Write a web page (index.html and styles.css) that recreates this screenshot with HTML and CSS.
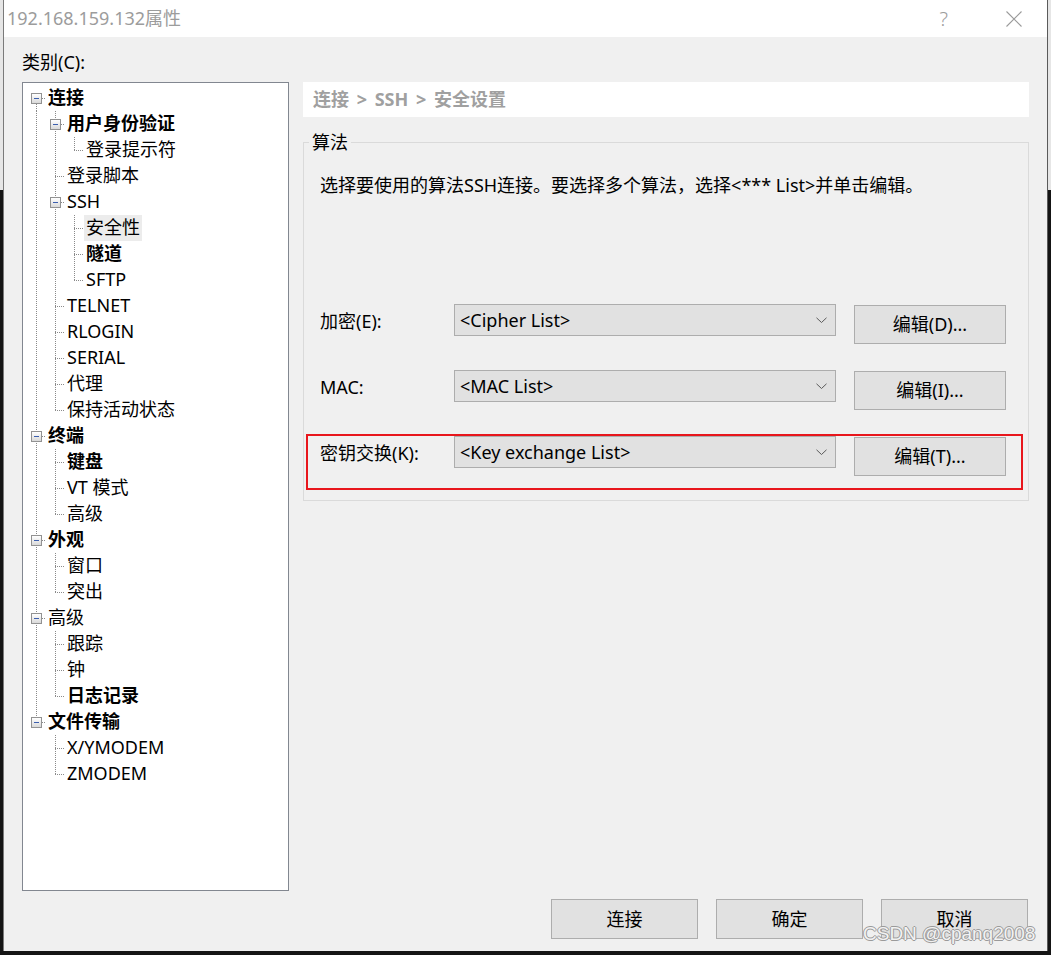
FILE: index.html
```html
<!DOCTYPE html>
<html lang="zh-CN">
<head>
<meta charset="utf-8">
<title>192.168.159.132属性</title>
<link rel="stylesheet" href="styles.css">
</head>
<body>
<div class="window">
  <div class="titlebar">
    <span class="title">192.168.159.132属性</span>
    <span class="help">?</span>
    <svg class="close" width="16" height="16" viewBox="0 0 16 16"><path d="M0.5 0.5 L15.5 15.5 M15.5 0.5 L0.5 15.5" stroke="#9a9a9a" stroke-width="1.1" fill="none"/></svg>
  </div>
  <div class="body">
    <div class="cat-label">类别(C):</div>
    <div class="tree">
      <div class="row"><span class="c f"><span class="exp"></span></span><span class="tx bold">连接</span></div>
      <div class="row"><span class="c p"></span><span class="c t"><span class="exp"></span></span><span class="tx bold">用户身份验证</span></div>
      <div class="row"><span class="c p"></span><span class="c p"></span><span class="c l"></span><span class="tx">登录提示符</span></div>
      <div class="row"><span class="c p"></span><span class="c t"></span><span class="tx">登录脚本</span></div>
      <div class="row"><span class="c p"></span><span class="c t"><span class="exp"></span></span><span class="tx">SSH</span></div>
      <div class="row"><span class="c p"></span><span class="c p"></span><span class="c t"></span><span class="tx sel">安全性</span></div>
      <div class="row"><span class="c p"></span><span class="c p"></span><span class="c t"></span><span class="tx bold">隧道</span></div>
      <div class="row"><span class="c p"></span><span class="c p"></span><span class="c l"></span><span class="tx">SFTP</span></div>
      <div class="row"><span class="c p"></span><span class="c t"></span><span class="tx">TELNET</span></div>
      <div class="row"><span class="c p"></span><span class="c t"></span><span class="tx">RLOGIN</span></div>
      <div class="row"><span class="c p"></span><span class="c t"></span><span class="tx">SERIAL</span></div>
      <div class="row"><span class="c p"></span><span class="c t"></span><span class="tx">代理</span></div>
      <div class="row"><span class="c p"></span><span class="c l"></span><span class="tx">保持活动状态</span></div>
      <div class="row"><span class="c t"><span class="exp"></span></span><span class="tx bold">终端</span></div>
      <div class="row"><span class="c p"></span><span class="c t"></span><span class="tx bold">键盘</span></div>
      <div class="row"><span class="c p"></span><span class="c t"></span><span class="tx">VT 模式</span></div>
      <div class="row"><span class="c p"></span><span class="c l"></span><span class="tx">高级</span></div>
      <div class="row"><span class="c t"><span class="exp"></span></span><span class="tx bold">外观</span></div>
      <div class="row"><span class="c p"></span><span class="c t"></span><span class="tx">窗口</span></div>
      <div class="row"><span class="c p"></span><span class="c l"></span><span class="tx">突出</span></div>
      <div class="row"><span class="c t"><span class="exp"></span></span><span class="tx">高级</span></div>
      <div class="row"><span class="c p"></span><span class="c t"></span><span class="tx">跟踪</span></div>
      <div class="row"><span class="c p"></span><span class="c t"></span><span class="tx">钟</span></div>
      <div class="row"><span class="c p"></span><span class="c l"></span><span class="tx bold">日志记录</span></div>
      <div class="row"><span class="c l"><span class="exp"></span></span><span class="tx bold">文件传输</span></div>
      <div class="row"><span class="c b"></span><span class="c t"></span><span class="tx">X/YMODEM</span></div>
      <div class="row"><span class="c b"></span><span class="c l"></span><span class="tx">ZMODEM</span></div>
    </div>
    <div class="right">
      <div class="crumb">连接 &gt; SSH &gt; 安全设置</div>
      <div class="group">
        <div class="legend">算法</div>
        <div class="desc">选择要使用的算法SSH连接。要选择多个算法，选择&lt;*** List&gt;并单击编辑。</div>
        <div class="rows">
          <div class="lbl">加密(E):</div>
          <div class="combo"><span>&lt;Cipher List&gt;</span><svg width="11" height="7" viewBox="0 0 11 7"><path d="M0.5 0.8 L5.5 5.5 L10.5 0.8" stroke="#5a5a5a" stroke-width="1" fill="none"/></svg></div>
          <div class="btn">编辑(D)...</div>
          <div class="lbl">MAC:</div>
          <div class="combo"><span>&lt;MAC List&gt;</span><svg width="11" height="7" viewBox="0 0 11 7"><path d="M0.5 0.8 L5.5 5.5 L10.5 0.8" stroke="#5a5a5a" stroke-width="1" fill="none"/></svg></div>
          <div class="btn">编辑(I)...</div>
          <div class="lbl">密钥交换(K):</div>
          <div class="combo"><span>&lt;Key exchange List&gt;</span><svg width="11" height="7" viewBox="0 0 11 7"><path d="M0.5 0.8 L5.5 5.5 L10.5 0.8" stroke="#5a5a5a" stroke-width="1" fill="none"/></svg></div>
          <div class="btn">编辑(T)...</div>
        </div>
        <div class="mark"></div>
      </div>
    </div>
    <div class="footer">
      <div class="fbtn">连接</div>
      <div class="fbtn">确定</div>
      <div class="fbtn">取消</div>
    </div>
  </div>
  <div class="watermark">CSDN @cpanq2008</div>
</div>
</body>
</html>
```
FILE: styles.css
```css
html, body {
  margin: 0;
  padding: 0;
}
body {
  width: 1051px;
  height: 955px;
  overflow: hidden;
  background: linear-gradient(to bottom, #e6e6e6 0, #e6e6e6 190px, #151515 190px, #151515 100%);
  font-family: "Noto Sans", "Noto Sans CJK SC", sans-serif;
  font-size: 18px;
  color: #000;
}
.window {
  position: relative;
  margin-left: 3px;
  width: 1045px;
  height: 951px;
  box-sizing: border-box;
  border-left: 1px solid #7a7a7a;
  border-right: 1px solid #5a5a5a;
  background: #f0f0f0;
}
.titlebar {
  height: 37px;
  background: #fff;
  display: flex;
  align-items: center;
  padding-left: 3px;
}
.title {
  color: #9c9c9c;
  font-size: 18px;
  line-height: 37px;
  flex: 1;
}
.help {
  color: #9c9c9c;
  font-size: 20px;
  font-weight: 300;
  line-height: 37px;
  margin-right: 58px;
}
.close {
  margin-right: 25px;
  display: block;
}
.body {
  display: grid;
  grid-template-columns: 267px 1fr;
  column-gap: 14px;
  padding: 12px 18px 0 18px;
}
.cat-label {
  grid-column: 1 / -1;
  height: 26px;
  line-height: 26px;
  margin-bottom: 7px;
}
.tree {
  height: 809px;
  box-sizing: border-box;
  border: 1px solid #828790;
  background: #fff;
  padding: 2px 0 0 4px;
}
.row {
  display: flex;
  height: 26px;
  white-space: nowrap;
}
.c {
  --v: repeating-linear-gradient(to bottom, #8a8a8a 0, #8a8a8a 1px, transparent 1px, transparent 2px);
  --h: repeating-linear-gradient(to right, #8a8a8a 0, #8a8a8a 1px, transparent 1px, transparent 2px);
  flex: none;
  width: 19px;
  height: 26px;
  display: flex;
  align-items: center;
}
.c.p {
  background: var(--v) 9px 0 / 1px 100% no-repeat;
}
.c.t {
  background: var(--h) 9px 13px / 10px 1px no-repeat, var(--v) 9px 0 / 1px 100% no-repeat;
}
.c.l {
  background: var(--h) 9px 13px / 10px 1px no-repeat, var(--v) 9px 0 / 1px 14px no-repeat;
}
.c.f {
  background: var(--h) 9px 13px / 10px 1px no-repeat, var(--v) 9px 13px / 1px 13px no-repeat;
}
.exp {
  width: 11px;
  height: 11px;
  box-sizing: border-box;
  margin-left: 4px;
  border: 1px solid #929292;
  background: linear-gradient(#3c5fae, #3c5fae) center / 5px 1px no-repeat, linear-gradient(#ffffff, #d9d9d9);
}
.tx {
  padding: 0 2px 2px 2px;
  line-height: 24px;
}
.bold {
  font-weight: bold;
}
.sel {
  background: #ececec;
}
.right {
  display: flex;
  flex-direction: column;
}
.crumb {
  height: 35px;
  line-height: 35px;
  background: #fff;
  padding-left: 10px;
  color: #a0a0a0;
  font-weight: bold;
  word-spacing: 3px;
}
.group {
  position: relative;
  margin-top: 25px;
  border: 1px solid #dadada;
  padding: 0 0 24px 16px;
}
.legend {
  width: fit-content;
  margin: -12px 0 0 -11px;
  padding: 0 3px;
  background: #f0f0f0;
  line-height: 22px;
}
.desc {
  margin-top: 19px;
  line-height: 26px;
}
.rows {
  margin-top: 106px;
  display: grid;
  grid-template-columns: 116px 382px 152px;
  column-gap: 18px;
  grid-auto-rows: 40px;
  row-gap: 26px;
}
.lbl {
  margin-top: 1px;
  line-height: 32px;
}
.combo {
  height: 32px;
  box-sizing: border-box;
  border: 1px solid #adadad;
  background: #e1e1e1;
  display: flex;
  align-items: center;
  justify-content: space-between;
  padding: 0 8px 0 5px;
  line-height: 30px;
}
.combo svg {
  display: block;
}
.btn {
  margin-top: 1px;
  height: 39px;
  box-sizing: border-box;
  border: 1px solid #adadad;
  background: #e1e1e1;
  text-align: center;
  line-height: 37px;
}
.mark {
  position: absolute;
  left: 2px;
  top: 291px;
  width: 717px;
  height: 56px;
  box-sizing: border-box;
  border: 2px solid #e8161c;
}
.footer {
  grid-column: 1 / -1;
  margin-top: 8px;
  display: flex;
  justify-content: flex-end;
  gap: 18px;
  padding-right: 1px;
}
.fbtn {
  width: 147px;
  height: 40px;
  box-sizing: border-box;
  border: 1px solid #adadad;
  background: #e1e1e1;
  text-align: center;
  line-height: 38px;
}
.watermark {
  position: absolute;
  left: 859px;
  top: 922px;
  font-family: "Liberation Sans", Arial, sans-serif;
  font-size: 19px;
  line-height: 24px;
  color: #f2f2f2;
  text-shadow: 1px 0 0 #9a9a9a, -1px 0 0 #9a9a9a, 0 1px 0 #9a9a9a, 0 -1px 0 #9a9a9a;
  white-space: nowrap;
}
```
